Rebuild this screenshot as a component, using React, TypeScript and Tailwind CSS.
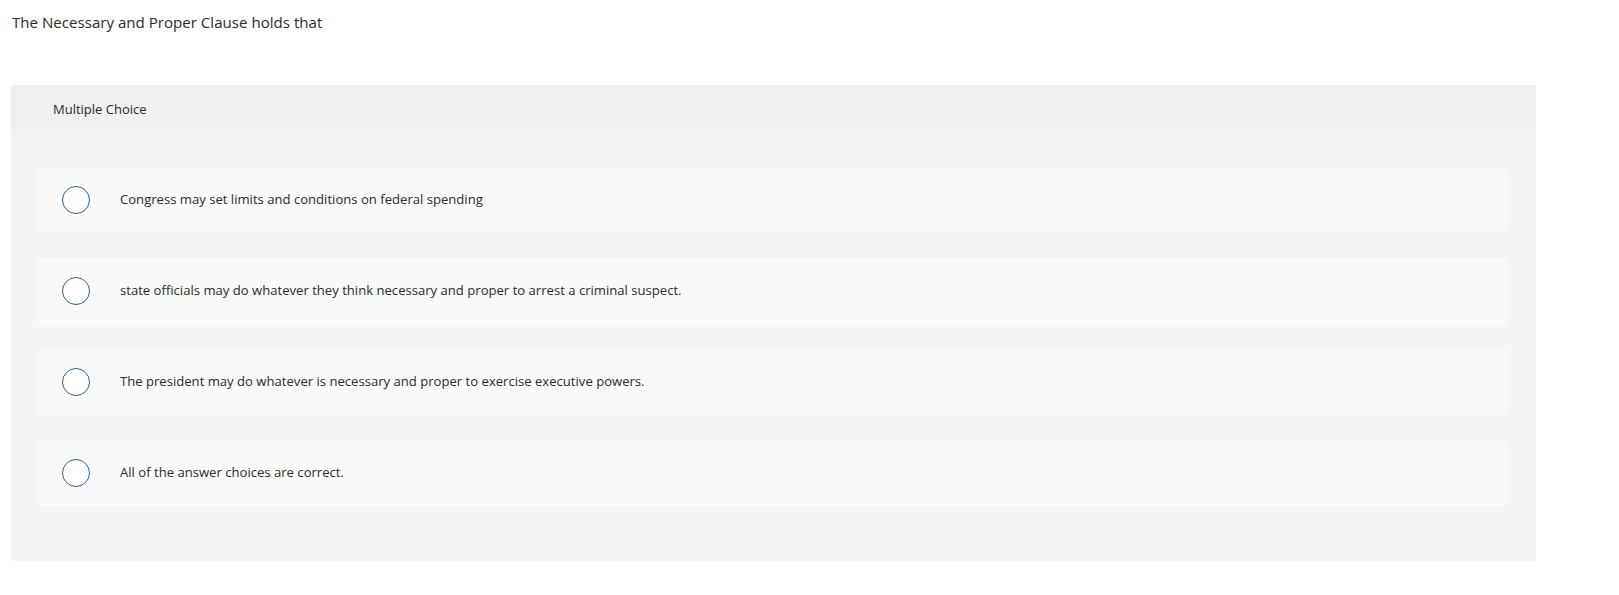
const choices = [
  "Congress may set limits and conditions on federal spending",
  "state officials may do whatever they think necessary and proper to arrest a criminal suspect.",
  "The president may do whatever is necessary and proper to exercise executive powers.",
  "All of the answer choices are correct.",
];

export default function App() {
  return (
    <div className="min-h-screen bg-white px-[11px] pt-[12px] font-['Open_Sans','Lato',sans-serif] text-[#2b2b2b]">
      <p className="pl-[1px] text-[15.1px] leading-[20px]">The Necessary and Proper Clause holds that</p>
      <div className="mt-[53px] w-[1525px] overflow-hidden rounded-[3px] bg-[#f5f5f5]">
        <div className="flex h-[50px] items-center bg-[#f0f0f0] pl-[42px] text-[13px]">Multiple Choice</div>
        <div className="flex flex-col gap-[25px] pb-[55px] pl-[26px] pr-[28px] pt-[32px]">
          {choices.map((choice) => (
            <label key={choice} className="flex h-[66px] cursor-pointer items-center rounded-[4px] bg-[#fafafa] pl-[25px]">
              <span className="h-[28px] w-[28px] shrink-0 rounded-full border-[1.5px] border-[#2f5f8f] bg-white" />
              <span className="pl-[30px] text-[13.1px]">{choice}</span>
            </label>
          ))}
        </div>
      </div>
    </div>
  );
}
